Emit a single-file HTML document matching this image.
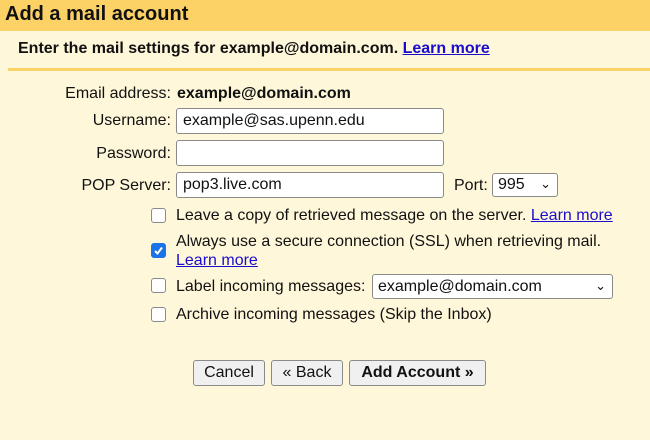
<!DOCTYPE html>
<html><head><style>
body{margin:0;width:650px;height:440px;background:#fff7da;font-family:"Liberation Sans",sans-serif;position:relative;overflow:hidden;color:#111}
.a{position:absolute;white-space:nowrap}
.hd{position:absolute;left:0;top:0;width:650px;height:31px;background:#fcd266}
.inp{position:absolute;background:#fff;border:1px solid #8a8a8a;border-radius:3px;box-sizing:border-box;font-size:16px;padding-left:6px;line-height:24px}
.cb{position:absolute;width:15px;height:15px;border:1px solid #8a8a8a;border-radius:3px;background:#fff;box-sizing:border-box}
.btn{position:absolute;height:26px;border:1px solid #8a8a8a;border-radius:3px;background:#f0f0f0;box-sizing:border-box;font-size:16px;text-align:center;line-height:24px}
a{color:#1a0dcc;text-decoration:underline}
.r{text-align:right;font-size:16px}
.f{font-size:16px}
</style></head><body>
<div class="hd"></div>
<div class="a" style="left:5px;top:3px;font-size:20px;font-weight:bold">Add a mail account</div>
<div class="a" style="left:18px;top:40px;font-size:16px;font-weight:bold">Enter the mail settings for example@domain.com. <a href="#">Learn more</a></div>
<div class="a" style="left:8px;top:68px;width:642px;height:3px;background:#fcd266"></div>
<div class="a r" style="right:479px;top:85px">Email address:</div>
<div class="a" style="left:177px;top:85px;font-size:16px;font-weight:bold">example@domain.com</div>
<div class="a r" style="right:479px;top:112px">Username:</div>
<div class="inp" style="left:176px;top:108px;width:268px;height:26px">example@sas.upenn.edu</div>
<div class="a r" style="right:479px;top:145px">Password:</div>
<div class="inp" style="left:176px;top:140px;width:268px;height:26px"></div>
<div class="a r" style="right:479px;top:177px">POP Server:</div>
<div class="inp" style="left:176px;top:172px;width:268px;height:26px">pop3.live.com</div>
<div class="a f" style="left:454px;top:177px">Port:</div>
<div class="inp" style="left:492px;top:173px;width:66px;height:24px;line-height:22px;padding-left:5px">995<span style="position:absolute;right:6px;top:-1px;font-size:13px">&#8964;</span></div>
<div class="cb" style="left:151px;top:208px"></div>
<div class="a f" style="left:176px;top:207px">Leave a copy of retrieved message on the server. <a href="#">Learn more</a></div>
<div class="cb" style="left:151px;top:243px;background:#1a73e8;border-color:#1a73e8"><svg width="13" height="13" style="position:absolute;left:0;top:0"><path d="M3 7l2.5 2.5L10 3.5" stroke="#fff" stroke-width="2" fill="none"/></svg></div>
<div class="a f" style="left:176px;top:233px">Always use a secure connection (SSL) when retrieving mail.</div>
<div class="a f" style="left:176px;top:252px"><a href="#">Learn more</a></div>
<div class="cb" style="left:151px;top:278px"></div>
<div class="a f" style="left:176px;top:278px">Label incoming messages:</div>
<div class="inp" style="left:372px;top:274px;width:241px;height:25px;line-height:23px;padding-left:5px">example@domain.com<span style="position:absolute;right:6px;top:-1px;font-size:13px">&#8964;</span></div>
<div class="cb" style="left:151px;top:307px"></div>
<div class="a f" style="left:176px;top:306px">Archive incoming messages (Skip the Inbox)</div>
<div class="btn" style="left:193px;top:360px;width:72px">Cancel</div>
<div class="btn" style="left:271px;top:360px;width:72px">« Back</div>
<div class="btn" style="left:349px;top:360px;width:137px;font-weight:bold">Add Account »</div>
</body></html>
